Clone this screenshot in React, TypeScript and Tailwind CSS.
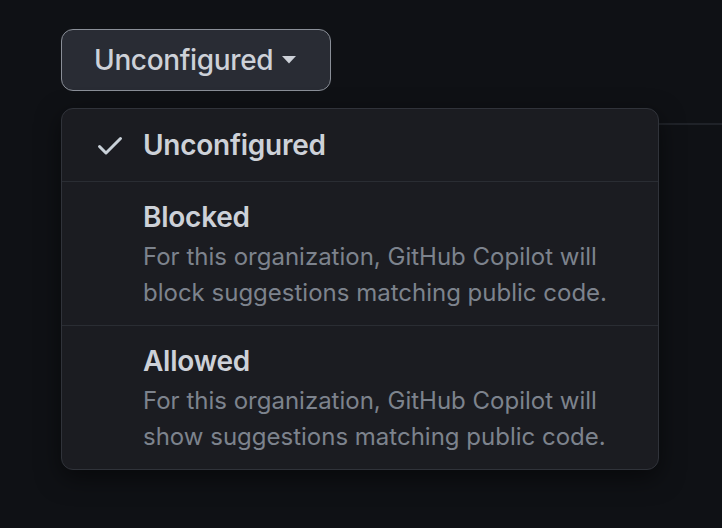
import React from "react";

function Check() {
  return (
    <svg width="32" height="32" viewBox="0 0 16 16" fill="#c9d1d9">
      <path d="M13.78 4.22a.75.75 0 0 1 0 1.06l-7.25 7.25a.75.75 0 0 1-1.06 0L2.22 9.28a.751.751 0 0 1 .018-1.042.751.751 0 0 1 1.042-.018L6 10.94l6.72-6.72a.75.75 0 0 1 1.06 0Z" />
    </svg>
  );
}

function Item({ title, desc, first }: { title: string; desc?: string[]; first?: boolean }) {
  return (
    <div className={`flex ${first ? "pt-[16px] pb-[16px]" : "border-t border-[#2a2d33] pt-[15px] pb-[14px]"}`}>
      <div className="w-[81px] shrink-0 flex justify-end pr-[17px]">
        {first && (
          <div className="h-[40px] flex items-center">
            <Check />
          </div>
        )}
      </div>
      <div className="flex flex-col">
        <div className="text-[28px] leading-[40px] font-semibold tracking-[-0.25px] text-[#cdd1d8]">{title}</div>
        {desc && (
          <div className="mt-[2px] text-[24px] leading-[36px] text-[#7d838d]">
            {desc.map((d) => (
              <div key={d}>{d}</div>
            ))}
          </div>
        )}
      </div>
    </div>
  );
}

export default function App() {
  return (
    <div
      className="relative w-[722px] h-[528px] overflow-hidden bg-[#0f1115]"
      style={{ fontFamily: "Inter, 'Noto Sans', sans-serif" }}
    >
      <div className="pt-[29px] pl-[61px]">
        <button className="h-[62px] w-[270px] flex items-center gap-[9px] pl-[32px] rounded-[12px] border border-[#8a8f98] bg-[#292c34] text-[28px] font-medium tracking-[-0.35px] text-[#cdd1d8]">
          <span>Unconfigured</span>
          <svg width="14" height="8" viewBox="0 0 14 8">
            <path d="M0 0h14L7 7.5z" fill="#cdd1d8" />
          </svg>
        </button>
      </div>
      <div className="ml-[61px] mt-[32px] h-[400px] border-t-[2px] border-[#1f2228]" />
      <div className="absolute left-[61px] top-[108px] w-[598px] rounded-[12px] border border-[#30333a] bg-[#1b1c21] shadow-[0_8px_24px_rgba(0,0,0,0.5)]">
        <Item title="Unconfigured" first />
        <Item
          title="Blocked"
          desc={["For this organization, GitHub Copilot will", "block suggestions matching public code."]}
        />
        <Item
          title="Allowed"
          desc={["For this organization, GitHub Copilot will", "show suggestions matching public code."]}
        />
      </div>
    </div>
  );
}
